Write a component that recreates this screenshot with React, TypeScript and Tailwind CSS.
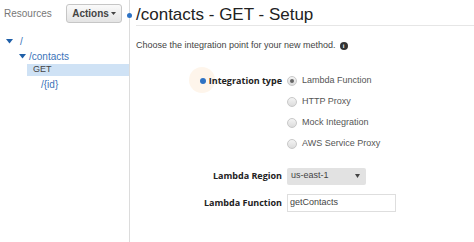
import React from "react";

function Caret() {
  return (
    <svg width="7" height="5" viewBox="0 0 7 5" className="inline-block">
      <path d="M0 0 L7 0 L3.5 4.5 Z" fill="#1f5fa8" />
    </svg>
  );
}

function Radio({ checked }: { checked?: boolean }) {
  return (
    <span className="w-[10px] h-[10px] rounded-full border border-[#c8c8c8] bg-gradient-to-b from-[#f4f4f4] to-[#dcdcdc] flex items-center justify-center">
      {checked && <span className="w-[4px] h-[4px] rounded-full bg-[#666]" />}
    </span>
  );
}

export default function App() {
  const options = ["Lambda Function", "HTTP Proxy", "Mock Integration", "AWS Service Proxy"];
  const label = "font-bold text-[#222] font-['Open_Sans',sans-serif] text-[9px]";
  return (
    <div className="w-[474px] h-[242px] bg-white flex overflow-hidden font-['Liberation_Sans',Arial,sans-serif] text-[#333]">
      {/* resource tree */}
      <div className="w-[130px] flex-none border-r border-[#dcdcdc] flex flex-col">
        <div className="h-[27px] flex items-center justify-between pl-[4px] pr-[7px]">
          <span className="text-[10px] text-[#777]">Resources</span>
          <button className="h-[19px] w-[56px] rounded-[3px] border border-[#c6c6c6] bg-gradient-to-b from-[#fafafa] to-[#e4e4e4] text-[10px] font-bold text-[#444] flex items-center justify-center gap-[2px]">
            Actions
            <svg width="5" height="3" viewBox="0 0 5 3"><path d="M0 0 L5 0 L2.5 3 Z" fill="#444" /></svg>
          </button>
        </div>
        <div className="mt-[8px] flex flex-col text-[10px] text-[#3b73b9]">
          <div className="h-[13px] flex items-center pl-[6px] gap-[7px]"><Caret /><span>/</span></div>
          <div className="h-[13px] mt-[2px] flex items-center pl-[19px] gap-[3px]"><Caret /><span>/contacts</span></div>
          <div className="h-[12px] mt-[1px] ml-[27px] bg-[#cfe2f5] flex items-center pl-[6px] text-[9px] text-[#444]">GET</div>
          <div className="h-[16px] flex items-center pl-[41px] text-[10px]">/{"{id}"}</div>
        </div>
      </div>

      {/* setup panel */}
      <div className="flex-1 flex flex-col relative">
        <span className="absolute left-[-3px] top-[13px] w-[5px] h-[5px] rounded-full bg-[#2d72c4]" />
        <div className="ml-[6px] h-[26px] border-b border-[#e6e6e6] flex items-center pt-[3px]">
          <span className="text-[17px] text-[#222] leading-none">/contacts - GET - Setup</span>
        </div>
        <div className="ml-[6px] mt-[13px] flex items-center gap-[4px] text-[9px] text-[#444]">
          <span>Choose the integration point for your new method.</span>
          <span className="w-[8px] h-[8px] rounded-full bg-[#333] text-white text-[6px] font-bold leading-none flex items-center justify-center">i</span>
        </div>

        <div className="mt-[21px] grid grid-cols-[152px_1fr] gap-x-[5px] text-[9px]">
          <div className="h-[14px] flex items-center justify-end">
            <div className="relative flex items-center gap-[3px]">
              <span className="absolute left-[-11px] top-[-7px] w-[26px] h-[26px] rounded-full bg-[#fdf1e3] opacity-70" />
              <span className="relative w-[6px] h-[6px] rounded-full bg-[#2d72c4]" />
              <span className={`relative ${label}`}>Integration type</span>
            </div>
          </div>
          <div className="flex flex-col gap-[7px]">
            {options.map((o, i) => (
              <div key={o} className="h-[14px] flex items-center gap-[5px] text-[#555]">
                <Radio checked={i === 0} />
                <span>{o}</span>
              </div>
            ))}
          </div>

          <div className={`mt-[17px] flex items-center justify-end ${label}`}>Lambda Region</div>
          <div className="mt-[17px]">
            <div className="w-[79px] h-[17px] bg-[#e2e2e2] rounded-[2px] flex items-center justify-between pl-[4px] pr-[6px] text-[#444]">
              <span>us-east-1</span>
              <svg width="5" height="4" viewBox="0 0 5 4"><path d="M0 0 L5 0 L2.5 4 Z" fill="#444" /></svg>
            </div>
          </div>

          <div className={`mt-[9px] flex items-center justify-end ${label}`}>Lambda Function</div>
          <div className="mt-[9px]">
            <div className="w-[109px] h-[18px] border border-[#dedede] flex items-center pl-[2px] text-[#444]">getContacts</div>
          </div>
        </div>
      </div>
    </div>
  );
}
